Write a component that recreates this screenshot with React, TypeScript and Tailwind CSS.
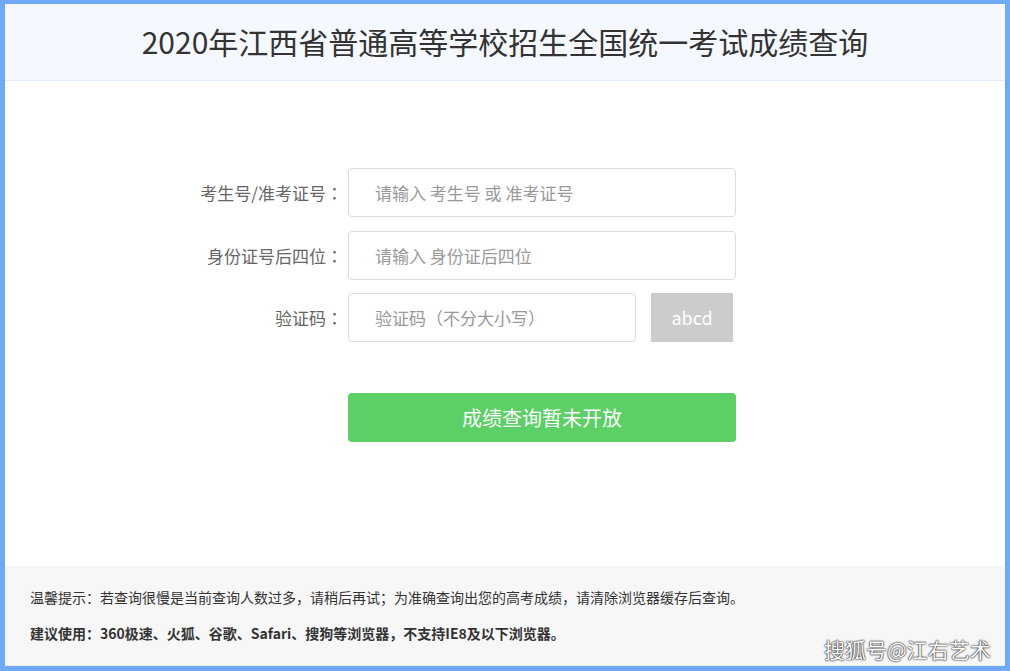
const FONT = "font-['Microsoft_YaHei','Noto_Sans_CJK_SC',sans-serif]";

function Field({ label, placeholder, width = "w-[388px]" }: { label: string; placeholder: string; width?: string }) {
  return (
    <>
      <label className="w-[170px] text-right text-[17px] text-[#666] pr-[5px]">
        {label}
        <span className="font-['Noto_Sans_CJK_TC',sans-serif]">：</span>
      </label>
      <input
        placeholder={placeholder}
        className={`${width} h-[49px] rounded-[4px] border border-[#dcdcdc] bg-white pl-[26px] text-[17px] text-[#333] outline-none placeholder:text-[#999]`}
      />
    </>
  );
}

export default function App() {
  return (
    <div className={`${FONT} relative w-[1010px] h-[671px] overflow-hidden bg-[#70aaf7] pt-[4px] px-[5px] pb-[5px]`}>
      <div className="flex h-full flex-col bg-white">
        <header className="flex h-[77px] items-center justify-center border-b border-[#e2edfb] bg-[#f5f9ff] pb-[2px]">
          <h1 className="text-[30px] text-[#333]">2020年江西省普通高等学校招生全国统一考试成绩查询</h1>
        </header>

        <main className="flex-1 pt-[87px]">
          <div className="ml-[173px] flex items-center">
            <Field label="考生号/准考证号" placeholder="请输入 考生号 或 准考证号" />
          </div>
          <div className="ml-[173px] mt-[14px] flex items-center">
            <Field label="身份证号后四位" placeholder="请输入 身份证后四位" />
          </div>
          <div className="ml-[173px] mt-[13px] flex items-center">
            <Field label="验证码" placeholder="验证码（不分大小写）" width="w-[288px]" />
            <div className="ml-[15px] flex h-[49px] w-[82px] items-center justify-center bg-[#cccccc] text-[18px] text-white">
              abcd
            </div>
          </div>
          <div className="ml-[343px] mt-[51px]">
            <button className="h-[49px] w-[388px] rounded-[4px] bg-[#5ccf66] text-[20px] text-white">
              成绩查询暂未开放
            </button>
          </div>
        </main>

        <footer className="h-[100px] border-b border-[#ececec] bg-[#f7f7f7] px-[25px] pt-[20px] text-[14px] text-[#333]">
          <p className="leading-[22px]">
            温馨提示：若查询很慢是当前查询人数过多，请稍后再试；为准确查询出您的高考成绩，请清除浏览器缓存后查询。
          </p>
          <p className="mt-[14px] font-bold leading-[22px]">
            建议使用：360极速、火狐、谷歌、Safari、搜狗等浏览器，不支持IE8及以下浏览器。
          </p>
        </footer>
      </div>

      <span className="absolute left-[824px] top-[634px] text-[21px] text-white [text-shadow:0_0_2px_#000,0_0_1px_#000]">
        搜狐号@江右艺术
      </span>
    </div>
  );
}
